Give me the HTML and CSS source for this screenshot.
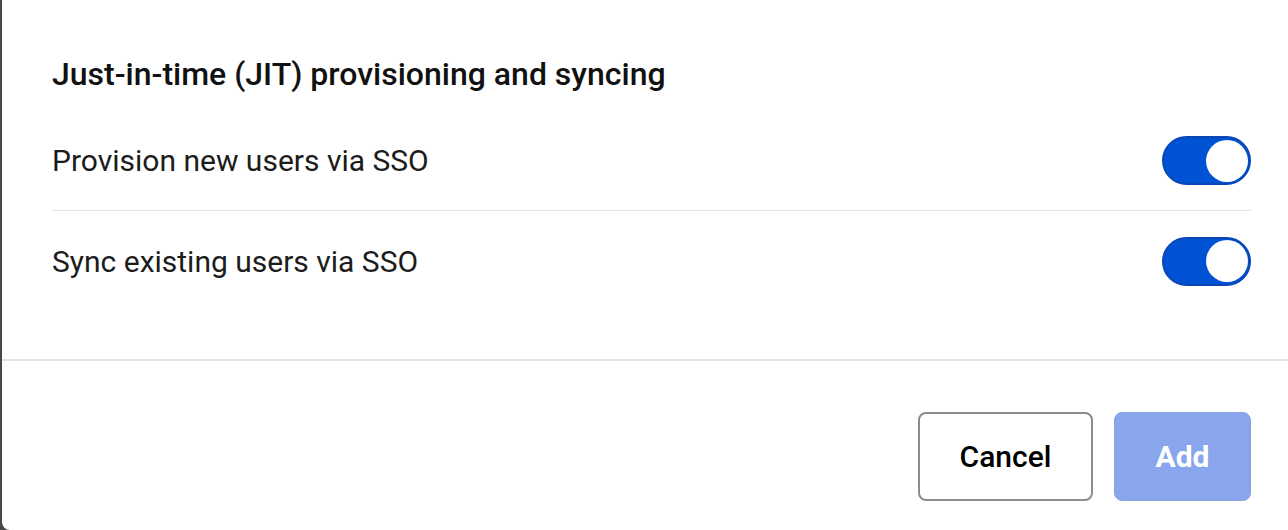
FILE: index.html
```html
<!DOCTYPE html>
<html>
<head>
<meta charset="utf-8">
<link rel="stylesheet" href="styles.css">
</head>
<body>
<div class="dialog">
  <section class="section">
    <h2 class="title">Just-in-time (JIT) provisioning and syncing</h2>
    <div class="row">
      <span class="label">Provision new users via SSO</span>
      <span class="toggle on"><span class="knob"></span></span>
    </div>
    <div class="row last">
      <span class="label">Sync existing users via SSO</span>
      <span class="toggle on"><span class="knob"></span></span>
    </div>
  </section>
  <footer class="footer">
    <button class="btn cancel">Cancel</button>
    <button class="btn add">Add</button>
  </footer>
</div>
</body>
</html>
```
FILE: styles.css
```css
html, body {
  margin: 0;
  padding: 0;
  height: 100%;
}
body {
  background: #474747;
  font-family: Roboto, "Liberation Sans", sans-serif;
  overflow: hidden;
}
.dialog {
  margin-left: 2px;
  height: 530px;
  background: #ffffff;
  border-bottom-left-radius: 8px;
  display: flex;
  flex-direction: column;
}
.section {
  padding: 54px 37px 48px 50px;
  border-bottom: 2px solid #e4e4e4;
}
.title {
  margin: 0 0 17px 0;
  font-size: 32px;
  line-height: 40px;
  font-weight: 500;
  color: #111111;
}
.row {
  height: 99px;
  display: flex;
  align-items: center;
  justify-content: space-between;
  border-bottom: 1px solid #e3e3e3;
}
.row.last {
  border-bottom: none;
  height: 100px;
}
.label {
  font-size: 30px;
  color: #1c1c1c;
}
.toggle {
  position: relative;
  box-sizing: border-box;
  width: 89px;
  height: 49px;
  border-radius: 25px;
  background: #0052d4;
  border: 2px solid #0a46b4;
}
.knob {
  position: absolute;
  top: 1.5px;
  right: 1.5px;
  width: 42px;
  height: 42px;
  border-radius: 50%;
  background: #ffffff;
}
.footer {
  display: flex;
  justify-content: flex-end;
  gap: 21px;
  padding: 51px 37px 0 0;
}
.btn {
  box-sizing: border-box;
  height: 89px;
  border-radius: 8px;
  font-family: Roboto, "Liberation Sans", sans-serif;
  font-size: 30px;
  font-weight: 500;
  cursor: pointer;
}
.cancel {
  width: 175px;
  background: #ffffff;
  border: 2px solid #8c8c8c;
  color: #000000;
}
.add {
  width: 137px;
  background: #89a6ec;
  border: 1px solid #8aa2e0;
  color: #ffffff;
  font-weight: 700;
}
```
